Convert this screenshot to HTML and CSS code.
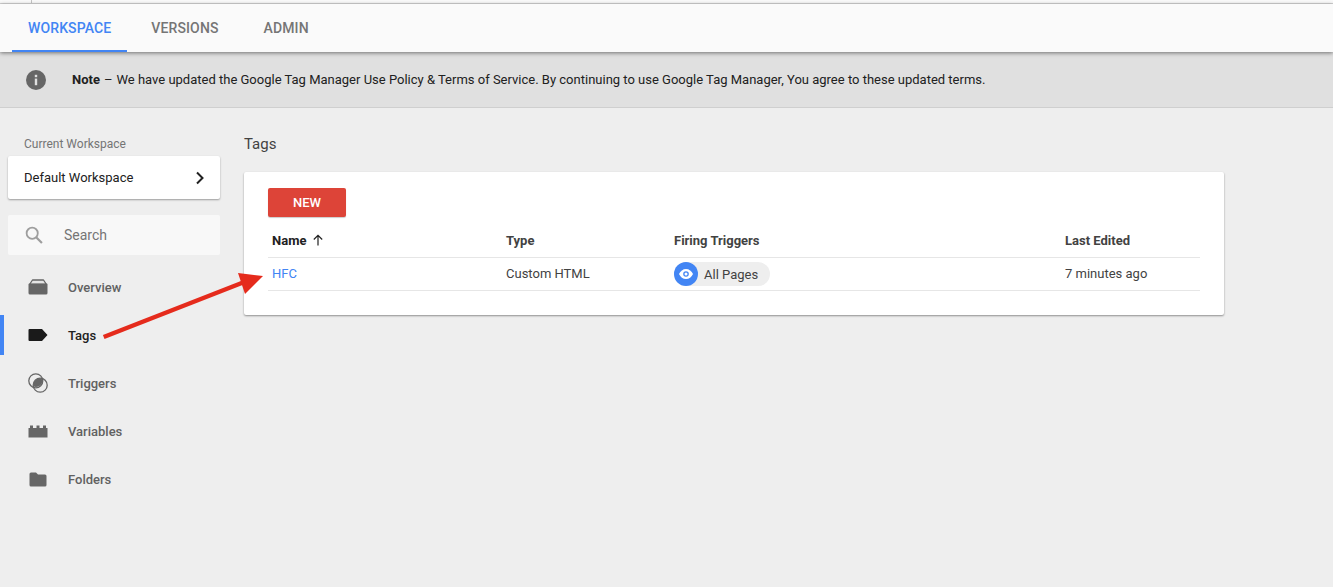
FILE: index.html
```html
<!DOCTYPE html>
<html lang="en">
<head>
<meta charset="utf-8">
<title>Tags</title>
<link rel="stylesheet" href="styles.css">
</head>
<body>
<div class="topstrip"><span class="tick"></span></div>
<nav class="tabs">
  <a class="tab active">WORKSPACE</a>
  <a class="tab">VERSIONS</a>
  <a class="tab">ADMIN</a>
</nav>
<div class="note">
  <svg class="info" width="22" height="22" viewBox="0 0 22 22"><circle cx="11" cy="11" r="10" fill="#666"/><rect x="9.800" y="9.600" width="2.400" height="6.600" fill="#e0e0e0"/><rect x="9.800" y="5.800" width="2.400" height="2.400" fill="#e0e0e0"/></svg>
  <p class="note-text"><strong>Note</strong><span class="dash">–</span>We have updated the Google Tag Manager Use Policy &amp; Terms of Service. By continuing to use Google Tag Manager, You agree to these updated terms.</p>
</div>
<div class="layout">
  <aside class="sidebar">
    <div class="ws-label">Current Workspace</div>
    <div class="ws-card">
      <span>Default Workspace</span>
      <svg width="10" height="14" viewBox="0 0 10 14"><path d="M2 1.500 7.500 7 2 12.500" fill="none" stroke="#212121" stroke-width="2"/></svg>
    </div>
    <div class="search">
      <svg width="18" height="18" viewBox="0 0 20 20"><circle cx="8" cy="8" r="6.200" fill="none" stroke="#9e9e9e" stroke-width="2"/><path d="M12.400 12.400 18.800 18.800" stroke="#9e9e9e" stroke-width="2.400"/></svg>
      <span>Search</span>
    </div>
    <ul class="menu">
      <li class="item">
        <svg width="20" height="16" viewBox="0 0 20 16"><path d="M4.500 1H15.500L18.500 5.500H1.500Z" fill="#e4e4e4" stroke="#666" stroke-width="1.300" stroke-linejoin="round"/><path d="M1.500 4.500H18.500A1 1 0 0 1 19.500 5.500V14A1.500 1.500 0 0 1 18 15.500H2A1.500 1.500 0 0 1 .5 14V5.500A1 1 0 0 1 1.500 4.500Z" fill="#666"/></svg>
        <span>Overview</span>
      </li>
      <li class="item current">
        <svg width="20" height="14" viewBox="0 0 20 14"><path d="M1.500 1H14l5.500 6-5.500 6H1.500A1 1 0 0 1 .5 12V2A1 1 0 0 1 1.500 1Z" fill="#1a1a1a"/></svg>
        <span>Tags</span>
      </li>
      <li class="item">
        <svg width="20" height="20" viewBox="0 0 20 20"><circle cx="7.800" cy="7.800" r="7" fill="none" stroke="#666" stroke-width="1.300"/><circle cx="12.200" cy="12.200" r="7" fill="none" stroke="#666" stroke-width="1.300"/><path d="M13.500 5.400A7 7 0 0 1 14.700 7.800 7 7 0 0 1 5.400 13.500 7 7 0 0 1 5.200 12.200 7 7 0 0 1 13.500 5.400Z" fill="#666"/></svg>
        <span>Triggers</span>
      </li>
      <li class="item">
        <svg width="20" height="13" viewBox="0 0 20 13"><path d="M0.500 3H2V0.500H5V3H8.500V0.500H11.500V3H15V0.500H18V3h1.500V12.500H.5Z" fill="#666"/></svg>
        <span>Variables</span>
      </li>
      <li class="item">
        <svg width="18" height="15" viewBox="0 0 18 15"><path d="M2 .5H7L9 2.500H16A1.500 1.500 0 0 1 17.500 4V13A1.500 1.500 0 0 1 16 14.500H2A1.500 1.500 0 0 1 .5 13V2A1.500 1.500 0 0 1 2 .5Z" fill="#666"/></svg>
        <span>Folders</span>
      </li>
    </ul>
  </aside>
  <main class="content">
    <h1 class="title">Tags</h1>
    <section class="card">
      <button class="new">NEW</button>
      <div class="row head">
        <div class="name">Name <svg class="sort" width="12" height="12" viewBox="0 0 12 12"><path d="M6 11.500V1.500M1.800 5.500 6 1.300 10.200 5.500" fill="none" stroke="#212121" stroke-width="1.200"/></svg></div>
        <div class="type">Type</div>
        <div class="trig">Firing Triggers</div>
        <div class="edit">Last Edited</div>
      </div>
      <div class="row body-row">
        <div class="name"><a class="link">HFC</a></div>
        <div class="type">Custom HTML</div>
        <div class="trig">
          <span class="chip">
            <span class="chip-icon"><svg width="14" height="10" viewBox="0 0 14 10"><path d="M7 0C4 0 1.400 2 0 5c1.400 3 4 5 7 5s5.600-2 7-5C12.600 2 10 0 7 0Z" fill="#fff"/><circle cx="7" cy="5" r="2.800" fill="#4285f4"/><circle cx="7" cy="5" r="1.500" fill="#fff"/></svg></span>
            All Pages
          </span>
        </div>
        <div class="edit">7 minutes ago</div>
      </div>
    </section>
  </main>
</div>
<svg class="arrow" width="1333" height="587" viewBox="0 0 1333 587"><path d="M103.700 337 243 282.500" stroke="#e52b1c" stroke-width="4.500" fill="none"/><path d="M263 276 238 273 245 294Z" fill="#e52b1c"/></svg>
</body>
</html>
```

FILE: styles.css
```css
* { box-sizing: border-box; }
html, body { margin: 0; padding: 0; }
body {
  width: 1333px;
  height: 587px;
  overflow: hidden;
  background: #eeeeee;
  font-family: Roboto, "Liberation Sans", sans-serif;
  font-size: 13px;
  color: #212121;
  position: relative;
}
.topstrip {
  height: 4px;
  background: #fafafa;
  border-bottom: 1px solid #d6d6d6;
  padding-left: 31px;
}
.tick { display: block; width: 1px; height: 3px; background: #c4c4c4; }
.tabs {
  height: 48px;
  background: #fafafa;
  display: flex;
  padding-left: 12px;
  box-shadow: 0 1px 4px rgba(0,0,0,.5);
  position: relative;
}
.tab {
  height: 48px;
  line-height: 48px;
  padding: 0 16px;
  margin-right: 13px;
  font-size: 14px;
  font-weight: 500;
  letter-spacing: .12px;
  color: #757575;
}
.tab.active { color: #4285f4; border-bottom: 2px solid #4285f4; margin-right: 8px; }
.note {
  height: 56px;
  background: #e0e0e0;
  border-bottom: 1px solid #cfcfcf;
  display: flex;
  align-items: center;
  padding-left: 25px;
  padding-bottom: 1px;
}
.info { margin-top: 2px; }
.note-text { margin: 0 0 0 25px; font-size: 13px; color: #212121; }
.note-text strong { font-weight: 700; }
.dash { margin: 0 4px 0 4px; }
.layout { display: flex; }
.sidebar { width: 244px; flex: none; }
.ws-label { margin: 29px 0 0 24px; height: 15px; line-height: 15px; font-size: 12px; color: #757575; }
.ws-card {
  margin: 4px 0 0 8px;
  width: 212px;
  height: 43px;
  background: #fff;
  border-radius: 2px;
  box-shadow: 0 1px 2px rgba(0,0,0,.35);
  display: flex;
  align-items: center;
  justify-content: space-between;
  padding: 0 15px 0 16px;
}
.search {
  margin: 16px 0 0 8px;
  width: 212px;
  height: 40px;
  background: #f8f8f8;
  border-radius: 2px;
  display: flex;
  align-items: center;
  padding-left: 17px;
  color: #757575;
  font-size: 14px;
}
.search span { margin-left: 21px; }
.menu { list-style: none; margin: 8px 0 0; padding: 0; }
.item {
  height: 48px;
  display: grid;
  grid-template-columns: 20px 1fr;
  column-gap: 20px;
  align-items: center;
  padding-left: 28px;
  font-weight: 500;
  color: #616161;
  position: relative;
}
.item svg { justify-self: center; }
.item.current { color: #212121; }
.item.current::before {
  content: "";
  position: absolute;
  left: 0;
  top: 4px;
  width: 4px;
  height: 40px;
  background: #4285f4;
}
.content { flex: none; width: 980px; }
.title { margin: 26px 0 0; height: 20px; line-height: 20px; font-size: 15px; font-weight: 400; color: #424242; }
.card {
  margin-top: 18px;
  height: 143px;
  background: #fff;
  border-radius: 2px;
  box-shadow: 0 1px 2px rgba(0,0,0,.4);
  padding: 16px 24px 0;
}
.new {
  display: block;
  width: 78px;
  height: 29px;
  border: 0;
  border-radius: 2px;
  background: #dd4438;
  box-shadow: 0 1px 1px rgba(0,0,0,.2);
  color: #fff;
  font: 500 13px Roboto, "Liberation Sans", sans-serif;
}
.row {
  display: grid;
  grid-template-columns: 234px 168px 391px 1fr;
  align-items: center;
  padding-left: 4px;
  border-bottom: 1px solid #e6e6e6;
}
.head { height: 41px; padding-top: 6px; font-weight: 700; color: #424242; }
.head .name { color: #212121; display: flex; align-items: center; gap: 6px; }
.body-row { height: 33px; padding-bottom: 2px; color: #424242; }
.link { color: #4285f4; }
.trig { display: flex; align-items: center; }
.chip {
  display: inline-flex;
  align-items: center;
  height: 24px;
  width: 96px;
  border-radius: 12px;
  background: #eeeeee;
  color: #424242;
  margin-top: 2px;
}
.head .trig { display: block; }
.chip-icon {
  width: 24px;
  height: 24px;
  border-radius: 50%;
  background: #4285f4;
  display: flex;
  align-items: center;
  justify-content: center;
  margin-right: 6px;
}
.arrow { position: absolute; left: 0; top: 0; pointer-events: none; }
```
